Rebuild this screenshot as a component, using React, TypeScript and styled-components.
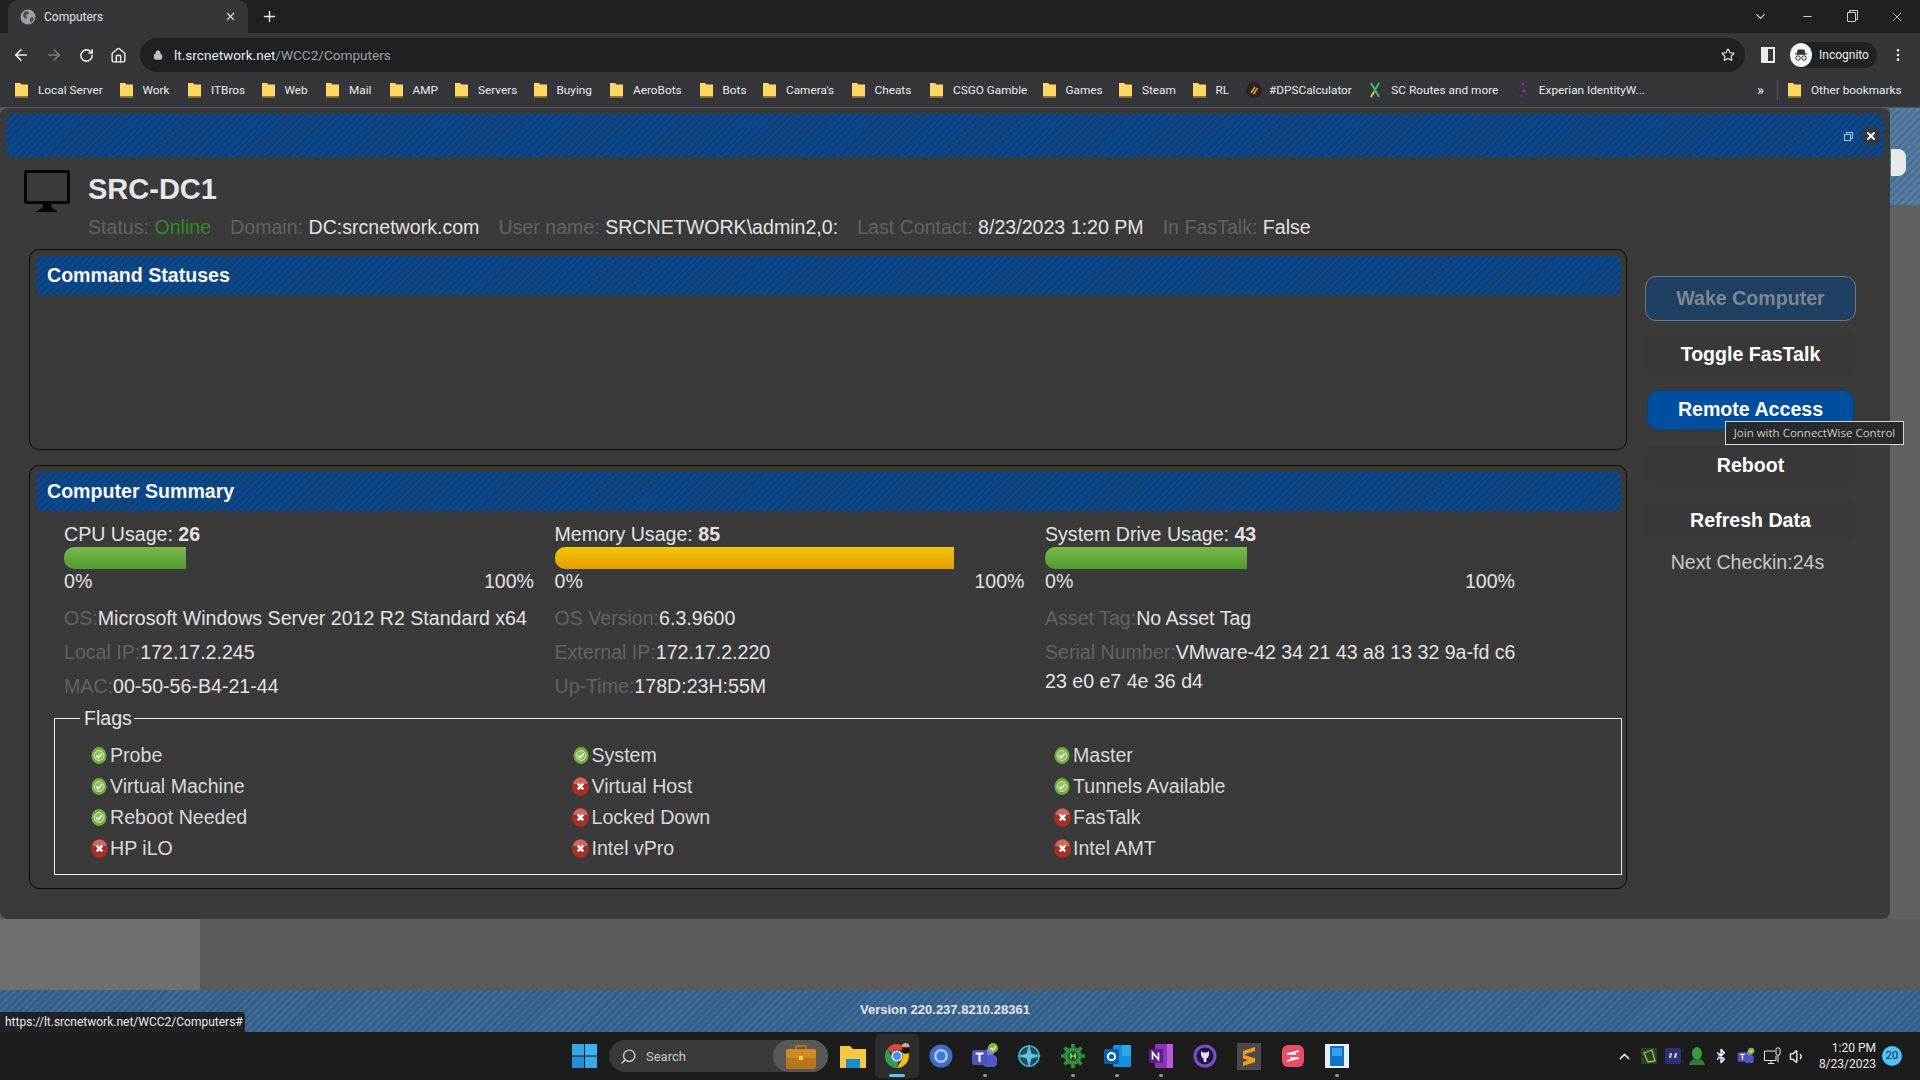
import React from "react";
import styled, { createGlobalStyle, css } from "styled-components";
import {
  ArrowLeft,
  ArrowRight,
  Bluetooth,
  ChevronDown,
  ChevronUp,
  Home,
  Lock,
  Minus,
  MoreVertical,
  Plus,
  RotateCw,
  Search,
  Star,
  Volume1,
  X,
} from "lucide-react";

const GlobalStyle = createGlobalStyle`
  html, body {
    margin: 0;
    padding: 0;
    width: 1920px;
    height: 1080px;
    overflow: hidden;
    background: #5b5b5b;
    font-family: "Liberation Sans", Arial, sans-serif;
  }
  * { box-sizing: border-box; }
`;

const CHROME_FONT = `Roboto, "Open Sans", sans-serif`;
const BODY_SIZE = "19.6px";

const stripes = (a: string, b: string) => css`
  background: repeating-linear-gradient(-45deg, ${a} 0 2.5px, ${b} 2.5px 5px);
`;

const bookmarks = [
  { label: "Local Server", w: 64 },
  { label: "Work", w: 28 },
  { label: "ITBros", w: 33 },
  { label: "Web", w: 24 },
  { label: "Mail", w: 23 },
  { label: "AMP", w: 25 },
  { label: "Servers", w: 38 },
  { label: "Buying", w: 36 },
  { label: "AeroBots", w: 49 },
  { label: "Bots", w: 23 },
  { label: "Camera's", w: 48 },
  { label: "Cheats", w: 38 },
  { label: "CSGO Gamble", w: 72 },
  { label: "Games", w: 36 },
  { label: "Steam", w: 33 },
  { label: "RL", w: 13 },
];

const flags = [
  { label: "Probe", ok: true },
  { label: "System", ok: true },
  { label: "Master", ok: true },
  { label: "Virtual Machine", ok: true },
  { label: "Virtual Host", ok: false },
  { label: "Tunnels Available", ok: true },
  { label: "Reboot Needed", ok: true },
  { label: "Locked Down", ok: false },
  { label: "FasTalk", ok: false },
  { label: "HP iLO", ok: false },
  { label: "Intel vPro", ok: false },
  { label: "Intel AMT", ok: false },
];

const FolderIcon = () => (
  <svg width="13" height="16" viewBox="0 0 13 16">
    <path d="M0 1h5l1.500 1.500H13V14.500H0z" fill="#fdd663" />
    <rect x="0" y="14.500" width="13" height="1.500" fill="#7a6a35" />
  </svg>
);

const FaviconGlobe = () => (
  <svg width="16" height="16" viewBox="0 0 16 16">
    <circle cx="8" cy="8" r="7.500" fill="#9aa0a6" />
    <path d="M4 3l4-1 1 3-3 1 1 3-2 1-2-3zM10 9l3-1 1 2-3 4-1-2z" fill="#4a4c50" />
  </svg>
);

const MonitorIcon = () => (
  <svg width="46" height="44" viewBox="0 0 46 44">
    <rect x="1.500" y="1.500" width="43" height="31" rx="1" fill="none" stroke="#050505" stroke-width="3" />
    <path d="M19 34h8l1 4 6 4H12l6-4z" fill="#050505" />
  </svg>
);

const FlagIcon = ({ ok }: { ok: boolean }) =>
  ok ? (
    <svg width="16" height="17" viewBox="0 0 16 17">
      <ellipse cx="8" cy="8.500" rx="7.500" ry="8.500" fill="#6fae3c" />
      <circle cx="8" cy="8.500" r="5" fill="#8cc063" stroke="#d5e8c0" stroke-width="1" />
      <path d="M5.300 8.600l2 2 3.400-4" fill="none" stroke="#fff" stroke-width="1.500" />
    </svg>
  ) : (
    <svg width="17" height="19" viewBox="0 0 17 19">
      <ellipse cx="8.500" cy="9.500" rx="8.500" ry="9.500" fill="#a92e23" />
      <path d="M1.500 7a7 6.500 0 0 1 14 0z" fill="#cf6a5e" />
      <path d="M5.700 6.700l5.600 5.600M11.300 6.700l-5.600 5.600" stroke="#fff" stroke-width="2.400" />
    </svg>
  );

const WindowsLogo = () => (
  <svg width="25" height="24" viewBox="0 0 25 24">
    <rect width="12" height="11.500" fill="#2fa8e6" />
    <rect x="13" width="12" height="11.500" fill="#3ab4ee" />
    <rect y="12.500" width="12" height="11.500" fill="#1f90d8" />
    <rect x="13" y="12.500" width="12" height="11.500" fill="#3aa8e6" />
  </svg>
);

const Briefcase = () => (
  <svg width="30" height="26" viewBox="0 0 30 26">
    <path d="M10 6V3h10v3" fill="none" stroke="#b5741a" stroke-width="2" />
    <rect y="6" width="30" height="20" rx="2" fill="#b8761c" />
    <rect y="6" width="30" height="9" rx="2" fill="#d08a24" />
    <rect x="13" y="13" width="4" height="4" fill="#f5d442" />
  </svg>
);

const ExplorerIcon = () => (
  <svg width="26" height="24" viewBox="0 0 26 24">
    <path d="M0 2h10l3 3h13v19H0z" fill="#f6c945" />
    <rect x="6" y="15" width="14" height="9" fill="#1f8ac8" />
  </svg>
);

const ChromeIcon = () => (
  <svg width="26" height="26" viewBox="0 0 24 24">
    <path d="M12 1a11 11 0 0 1 9.500 5.500H12a5.500 5.500 0 0 0-5 3L3.200 5.200A11 11 0 0 1 12 1z" fill="#e0463a" />
    <path d="M21.500 6.500A11 11 0 0 1 12 23l4.600-8a5.500 5.500 0 0 0 .2-6z" fill="#f4c20d" />
    <path d="M3.200 5.200L7.800 14a5.500 5.500 0 0 0 5.200 3.500L12 23A11 11 0 0 1 3.200 5.200z" fill="#2f9e4f" />
    <circle cx="12" cy="12" r="4.500" fill="#4a8df0" stroke="#fff" stroke-width="1.200" />
    <circle cx="20" cy="3.500" r="3.500" fill="#d8a890" />
    <path d="M16.500 4h7v2.500a3.500 3.500 0 0 1-7 0z" fill="#111" />
  </svg>
);

const ChromiumIcon = () => (
  <svg width="24" height="26" viewBox="0 0 24 24">
    <circle cx="12" cy="12" r="11.500" fill="#3f6fc4" />
    <circle cx="12" cy="12" r="7" fill="#a9c6f4" />
    <circle cx="12" cy="12" r="4.500" fill="#3f78d8" />
  </svg>
);

const TeamsIcon = ({ size = 28 }: { size?: number }) => (
  <svg width={size} height={size} viewBox="0 0 28 28">
    <circle cx="19" cy="10" r="4" fill="#7b83eb" />
    <rect x="12" y="13" width="14" height="12" rx="4" fill="#5059c9" />
    <rect x="1" y="8" width="15" height="15" rx="2" fill="#4b53bc" />
    <path d="M4.500 11.500h8M8.500 11.500V20" stroke="#fff" stroke-width="2" />
    <circle cx="22" cy="6" r="5" fill="#7fba3c" />
    <path d="M19.500 6l2 2 3-3.500" fill="none" stroke="#fff" stroke-width="1.300" />
  </svg>
);

const CompassIcon = () => (
  <svg width="24" height="26" viewBox="0 0 24 24">
    <circle cx="12" cy="12" r="10" fill="#1e4a5a" stroke="#45b0c8" stroke-width="1.600" />
    <path d="M12 0l2.400 9.600L24 12l-9.600 2.400L12 24l-2.400-9.600L0 12l9.600-2.400z" fill="#5cc2dc" />
  </svg>
);

const GearIcon = () => (
  <svg width="26" height="26" viewBox="0 0 24 24">
    <circle cx="12" cy="12" r="8" fill="#2f8f3a" />
    <path
      d="M12 1v4M12 19v4M1 12h4M19 12h4M4.200 4.200l3 3M16.800 16.800l3 3M4.200 19.800l3-3M16.800 7.200l3-3"
      stroke="#2f8f3a"
      stroke-width="3.400"
    />
    <circle cx="12" cy="12" r="4.500" fill="#1d4f26" />
    <path d="M10 9.500v5M14 9.500v5M10 12h4" stroke="#b8e0b0" stroke-width="1.100" />
  </svg>
);

const OutlookIcon = () => (
  <svg width="27" height="26" viewBox="0 0 27 26">
    <rect x="9" y="2" width="18" height="22" rx="1.500" fill="#1490df" />
    <rect x="18" y="2" width="9" height="11" fill="#28a8ea" />
    <rect y="6" width="15" height="15" rx="1.500" fill="#0a5fa8" />
    <circle cx="7.500" cy="13.500" r="3.600" fill="none" stroke="#fff" stroke-width="2" />
  </svg>
);

const OneNoteIcon = () => (
  <svg width="24" height="26" viewBox="0 0 24 26">
    <rect x="6" y="1" width="18" height="24" rx="1.500" fill="#9332bf" />
    <rect x="18" y="1" width="6" height="24" fill="#ba5ad8" />
    <rect y="6" width="14" height="14" rx="1.500" fill="#5d1d8c" />
    <path d="M3.500 16.500v-7l6 7v-7" fill="none" stroke="#fff" stroke-width="1.600" />
  </svg>
);

const GithubIcon = () => (
  <svg width="24" height="26" viewBox="0 0 24 24">
    <circle cx="12" cy="12" r="11.500" fill="#7c4fc4" />
    <circle cx="12" cy="12" r="8.500" fill="#24123f" />
    <path d="M8 7l2 1.400h4L16 7v4l-1 2.400-1.600 1V18h-2.800v-3.600L9 13.400 8 11z" fill="#e6dcf5" />
  </svg>
);

const SublimeIcon = () => (
  <svg width="24" height="27" viewBox="0 0 24 27">
    <rect width="24" height="27" fill="#4a4a4a" />
    <path d="M6 8l12-4v4L6 12zM6 11.500l12 4v4l-12-4zM6 19l12-4v4L6 23z" fill="#f59a1e" />
  </svg>
);

const PinkIcon = () => (
  <svg width="24" height="26" viewBox="0 0 24 24">
    <rect x="1" y="1" width="22" height="22" rx="6" fill="#ec4b66" />
    <path d="M6 10l12-3M6 17l12-3M6 10h9M9 14h9" stroke="#fff" stroke-width="1.600" />
  </svg>
);

const FilmIcon = () => (
  <svg width="24" height="24" viewBox="0 0 24 24">
    <rect width="24" height="24" fill="#e6eef6" />
    <rect x="5" y="2" width="14" height="20" fill="#1273c4" />
    <rect x="7" y="4" width="10" height="8" fill="#3aa0e8" />
  </svg>
);

const TrayMonitor = () => (
  <svg width="18" height="18" viewBox="0 0 18 18" fill="none" stroke="#e6e6e6" stroke-width="1">
    <path d="M12 4H1.500v9.500H13V9" />
    <path d="M5 16.500h6M8 13.500v3" />
    <rect x="13" y="1" width="4" height="7" rx="1" />
    <path d="M15 8v7" />
  </svg>
);

const TrayGreen = () => (
  <svg width="16" height="16" viewBox="0 0 16 16">
    <rect width="16" height="16" fill="#2c3f2b" />
    <path d="M3 5l8-3 3 11-7 1z" fill="none" stroke="#8ccf3f" stroke-width="1.300" />
  </svg>
);

const TrayQuote = () => (
  <svg width="16" height="16" viewBox="0 0 16 16">
    <rect width="16" height="16" rx="2" fill="#2f2f73" />
    <path d="M5 5h2L6 10H4zM10 5h2l-1 5H9z" fill="#d8d8f4" />
  </svg>
);

const TrayPerson = () => (
  <svg width="16" height="18" viewBox="0 0 16 18">
    <ellipse cx="8" cy="6.500" rx="5" ry="6.500" fill="#3c9a3c" />
    <path d="M0 18c1-5 4-6 8-6s7 1 8 6z" fill="#2f7d2f" />
  </svg>
);

const BLUE_BAR = stripes("#034b96", "#163f70");

const Screen = styled.div`
  width: 1920px;
  height: 1080px;
  display: flex;
  flex-direction: column;
  position: relative;
  overflow: hidden;
`;

const TabStrip = styled.div`
  height: 33px;
  background: #1f2023;
  display: flex;
  align-items: stretch;
  padding-left: 8px;
  color: #e8eaed;
  font-family: ${CHROME_FONT};
`;

const Tab = styled.div`
  width: 240px;
  background: #35363a;
  border-radius: 10px 10px 0 0;
  display: flex;
  align-items: center;
  padding: 0 11px 0 12px;
  font-size: 12px;
  gap: 8px;
  color: #dfe1e5;
`;

const TabTitle = styled.span`
  flex: 1;
`;

const NewTab = styled.div`
  width: 42px;
  display: flex;
  align-items: center;
  justify-content: center;
`;

const WindowButtons = styled.div`
  margin-left: auto;
  display: flex;
  align-items: center;
  gap: 33px;
  padding-right: 15px;
  color: #d0d0d0;
`;

const RestoreGlyph = styled.span`
  width: 9px;
  height: 10px;
  border: 1px solid #d0d0d0;
  border-radius: 1px;
  box-shadow: 2px -2px 0 -1px #1f2023, 2px -2px 0 0 #d0d0d0;
`;

const Toolbar = styled.div`
  height: 41px;
  background: #35363a;
  display: flex;
  align-items: center;
  padding: 3px 0 0 5px;
  color: #e8eaed;
  font-family: ${CHROME_FONT};
`;

const NavButton = styled.span<{ $dim?: boolean }>`
  width: 32.5px;
  flex-shrink: 0;
  display: flex;
  justify-content: center;
  color: ${(p) => (p.$dim ? "#7a7c80" : "#eceef1")};
`;

const AddressBar = styled.div`
  width: 1605px;
  flex-shrink: 0;
  height: 34px;
  margin-left: 5px;
  background: #1f2023;
  border-radius: 17px;
  display: flex;
  align-items: center;
  padding: 0 10px 0 13px;
  font-size: 13.6px;
`;

const Host = styled.span`
  margin-left: 11px;
  color: #e8eaed;
`;

const Path = styled.span`
  color: #9aa0a6;
`;

const SideToggle = styled.span`
  width: 14px;
  height: 16px;
  flex-shrink: 0;
  margin-left: 16px;
  border: 2px solid #e8eaed;
  border-left-width: 7px;
`;

const ProfilePill = styled.div`
  width: 87px;
  height: 26px;
  flex-shrink: 0;
  margin-left: 15px;
  background: #202124;
  border-radius: 13px;
  display: flex;
  align-items: center;
  gap: 7px;
  font-size: 12px;
  color: #e8eaed;
`;

const ProfileAvatar = styled.span`
  width: 22px;
  height: 24px;
  border-radius: 50%;
  background: #f4f4f4;
  display: flex;
  align-items: center;
  justify-content: center;
`;

const MenuDots = styled.span`
  margin-left: 13px;
  display: flex;
`;

const BookmarksBar = styled.div`
  height: 34px;
  background: #35363a;
  border-bottom: 1px solid #55575b;
  display: flex;
  align-items: center;
  padding: 0 0 2px 15px;
  gap: 17.5px;
  font-family: ${CHROME_FONT};
  font-size: 11.8px;
  color: #e8eaed;
`;

const Bookmark = styled.div<{ $gap?: number }>`
  display: flex;
  align-items: center;
  gap: ${(p) => p.$gap ?? 10}px;
  white-space: nowrap;
`;

const BookmarkLabel = styled.span<{ $w: number }>`
  width: ${(p) => p.$w}px;
`;

const BookmarkTail = styled.div`
  margin-left: auto;
  display: flex;
  align-items: center;
  gap: 10px;
  padding-right: 14px;
`;

const Chevrons = styled.span`
  margin-right: 3px;
  font-size: 15px;
`;

const TailLabel = styled.span`
  width: 95px;
`;

const Divider = styled.span`
  width: 1px;
  height: 20px;
  background: #55575b;
`;

const PageArea = styled.div`
  flex: 1;
  display: grid;
  grid-template-columns: 1890px 30px;
  grid-template-rows: 811px 71px;
  background: #5b5b5b;
  position: relative;
`;

const SideStrip = styled.div`
  position: relative;
  background: linear-gradient(to bottom, transparent 97px, #606060 97px),
    repeating-linear-gradient(-45deg, #47709a 0 2.5px, #5a7c9f 2.5px 5px);
`;

const ChatBubble = styled.span`
  position: absolute;
  left: 1px;
  top: 41px;
  width: 15px;
  height: 27px;
  border-radius: 0 8px 8px 0;
  background: #e9e9e9;
`;

const LowerBand = styled.div`
  grid-column: 1 / span 2;
  display: flex;
  background: #5b5b5b;
`;

const LowerLeft = styled.div`
  width: 200px;
  background: #6f6f6f;
`;

const Modal = styled.div`
  background: #3a3a3a;
  border-radius: 8px;
  padding: 6px;
  color: #e2e2e2;
`;

const ModalBar = styled.div`
  ${BLUE_BAR}
  height: 43px;
  border-radius: 6px;
  display: flex;
  align-items: center;
  justify-content: flex-end;
  padding-right: 3px;
  gap: 10px;
`;

const RestoreIcon = styled.span`
  width: 7px;
  height: 7px;
  margin-top: 3px;
  border: 1px solid #9ec4ea;
  box-shadow: 2px -2px 0 -1px #0b4c90, 2px -2px 0 0 #9ec4ea;
`;

const CloseCircle = styled.span`
  width: 20px;
  height: 20px;
  border-radius: 50%;
  background: #2f3a48;
  color: #f2f2f2;
  display: flex;
  align-items: center;
  justify-content: center;
`;

const Hero = styled.div`
  height: 92px;
  display: grid;
  grid-template-columns: 64px 1fr;
  padding: 13px 0 0 18px;
`;

const HostName = styled.h1`
  margin: 2px 0 9px;
  font-size: 29px;
  line-height: 34px;
  font-weight: 700;
  color: #e6e6e6;
`;

const StatusRow = styled.div`
  display: flex;
  gap: 19px;
  font-size: ${BODY_SIZE};
  line-height: 24px;
`;

const Muted = styled.span`
  color: #636363;
`;

const Online = styled.span`
  color: #2f8a24;
`;

const Columns = styled.div`
  display: flex;
  padding-left: 23px;
`;

const Panels = styled.div`
  width: 1598px;
  flex-shrink: 0;
  display: flex;
  flex-direction: column;
  gap: 15px;
`;

const Panel = styled.section<{ $h: number }>`
  height: ${(p) => p.$h}px;
  border: 1px solid #0a0a0a;
  border-radius: 10px;
  padding: 6px 5px 5px 6px;
`;

const PanelBar = styled.div`
  ${BLUE_BAR}
  height: 39px;
  border-radius: 6px;
  padding-left: 11px;
  font-size: ${BODY_SIZE};
  line-height: 39px;
  font-weight: 700;
  color: #f6f6f6;
`;

const SummaryGrid = styled.div`
  display: grid;
  grid-template-columns: 470px 470px 480px;
  column-gap: 20.5px;
  padding: 11px 0 0 28px;
  height: 195px;
`;

const SummaryColumn = styled.div`
  display: flex;
  flex-direction: column;
`;

const UsageLabel = styled.div`
  font-size: ${BODY_SIZE};
  line-height: 24px;
`;

const Track = styled.div`
  width: 470px;
  height: 22px;
  margin-top: 1px;
  border-radius: 10px 0 0 10px;
  overflow: hidden;
`;

const Fill = styled.div<{ $value: number; $warn?: boolean }>`
  height: 100%;
  width: ${(p) => p.$value}%;
  background: ${(p) =>
    p.$warn
      ? "linear-gradient(#f0c808, #e99c02)"
      : "linear-gradient(#7cb84c, #4f9a30)"};
`;

const Scale = styled.div`
  width: 470px;
  display: flex;
  justify-content: space-between;
  font-size: ${BODY_SIZE};
  line-height: 22px;
  margin: 1px 0 12px;
`;

const Field = styled.div`
  font-size: ${BODY_SIZE};
  line-height: 29px;
  margin-bottom: 5px;
`;

const Flags = styled.fieldset`
  margin: 0 0 0 18px;
  width: 1568px;
  height: 169px;
  border: 1px solid #e8e8e8;
  padding: 10px 0 0 0;
`;

const FlagsLegend = styled.legend`
  margin-left: 25px;
  padding: 0 2px 0 4px;
  font-size: ${BODY_SIZE};
  line-height: 24px;
`;

const FlagGrid = styled.div`
  display: grid;
  grid-template-columns: repeat(3, 481.5px);
  padding-left: 35px;
`;

const FlagRow = styled.div`
  display: flex;
  align-items: center;
  gap: 2px;
  height: 31px;
  font-size: ${BODY_SIZE};
  color: #d8d8d8;
`;

const FlagMark = styled.span`
  width: 18px;
  flex-shrink: 0;
  display: flex;
  justify-content: center;
`;

const Actions = styled.aside`
  width: 211px;
  flex-shrink: 0;
  margin-left: 18px;
  padding-top: 27px;
  display: flex;
  flex-direction: column;
  font-size: ${BODY_SIZE};
  font-weight: 700;
`;

const ActionButton = styled.button<{ $kind?: "wake" | "active"; $h: number }>`
  position: relative;
  height: ${(p) => p.$h}px;
  margin-bottom: ${(p) => (p.$kind === "wake" ? 11 : 15)}px;
  padding: 1px 0 0;
  font: inherit;
  border-radius: 11px;
  border: none;
  color: #fff;
  background: #383838;
  ${(p) =>
    p.$kind === "wake" &&
    css`
      padding: 0;
      background: #1f3f63;
      border: 1px solid #6d7883;
      color: #7c8794;
    `}
  ${(p) =>
    p.$kind === "active" &&
    css`
      margin-left: 2px;
      margin-right: 2px;
      padding: 0 0 2px;
      background: #024e9e;
      border: 1px solid #0f3f73;
    `}
`;

const Tooltip = styled.div`
  position: absolute;
  left: 77px;
  top: 30px;
  width: 179px;
  height: 24px;
  z-index: 2;
  background: #2b2b2b;
  border: 1px solid #d4d4d4;
  font-family: "Open Sans", sans-serif;
  font-size: 11.5px;
  font-weight: 400;
  line-height: 22px;
  text-align: center;
  color: #c9c9c9;
  white-space: nowrap;
`;

const NextCheckin = styled.div`
  margin-top: -5px;
  font-weight: 400;
  line-height: 24px;
  text-align: center;
  padding-right: 6px;
  color: #c8c8c8;
`;

const Footer = styled.footer`
  ${stripes("#3f6c96", "#335d88")}
  height: 42px;
  position: relative;
  padding: 12px 0 0 860px;
  font-size: 13px;
  font-weight: 700;
  line-height: 16px;
  color: #e6e6e6;
`;

const StatusBubble = styled.div`
  position: absolute;
  left: 0;
  bottom: 0;
  width: 245px;
  height: 20px;
  background: #202124;
  border-radius: 0 4px 0 0;
  padding-left: 5px;
  font-family: ${CHROME_FONT};
  font-size: 12px;
  font-weight: 400;
  line-height: 20px;
  color: #e8eaed;
`;

const Taskbar = styled.div`
  height: 48px;
  background: #1c1c1c;
  display: flex;
  align-items: center;
  padding-left: 572px;
  font-family: ${CHROME_FONT};
  color: #e6e6e6;
`;

const SearchPill = styled.div`
  width: 219px;
  height: 32px;
  margin: 0 3px 0 12px;
  border-radius: 16px;
  background: #3a3a3a;
  display: flex;
  align-items: center;
  padding-left: 11px;
  gap: 9px;
  font-size: 13px;
  color: #c8c8c8;
`;

const SearchBadge = styled.span`
  margin-left: auto;
  width: 55px;
  height: 32px;
  border-radius: 16px;
  background: #585858;
  display: flex;
  align-items: center;
  justify-content: center;
`;

const TaskSlot = styled.div<{ $open?: boolean; $active?: boolean }>`
  position: relative;
  width: 44px;
  height: 44px;
  border-radius: 5px;
  display: flex;
  align-items: center;
  justify-content: center;
  background: ${(p) => (p.$active ? "#2d2d2d" : "transparent")};
  &::after {
    content: "";
    display: ${(p) => (p.$open || p.$active ? "block" : "none")};
    position: absolute;
    bottom: 1px;
    left: 50%;
    transform: translateX(-50%);
    width: ${(p) => (p.$active ? 16 : 4)}px;
    height: 3px;
    border-radius: 2px;
    background: ${(p) => (p.$active ? "#5cc3f2" : "#9a9a9a")};
  }
`;

const Tray = styled.div`
  margin-left: auto;
  display: flex;
  align-items: center;
  gap: 8px;
  padding-right: 18px;
`;

const Clock = styled.div`
  width: 62px;
  text-align: right;
  font-size: 12px;
  line-height: 16px;
`;

const CountBadge = styled.span`
  width: 20px;
  height: 20px;
  margin-left: -2px;
  border-radius: 50%;
  background: #4cc2ff;
  color: #1c1c1c;
  font-size: 11px;
  line-height: 20px;
  text-align: center;
`;

const App = () => {
  return (
    <Screen>
      <GlobalStyle />
      <TabStrip>
        <Tab>
          <FaviconGlobe />
          <TabTitle>Computers</TabTitle>
          <X size={13} />
        </Tab>
        <NewTab>
          <Plus size={17} />
        </NewTab>
        <WindowButtons>
          <ChevronDown size={15} />
          <Minus size={13} />
          <RestoreGlyph />
          <X size={16} strokeWidth={1.2} />
        </WindowButtons>
      </TabStrip>

      <Toolbar>
        <NavButton><ArrowLeft size={18} /></NavButton>
        <NavButton $dim><ArrowRight size={18} /></NavButton>
        <NavButton><RotateCw size={15} strokeWidth={2.5} /></NavButton>
        <NavButton><Home size={17} /></NavButton>
        <AddressBar>
          <Lock size={10} color="#c0c2c6" fill="#c0c2c6" />
          <Host>lt.srcnetwork.net</Host>
          <Path>/WCC2/Computers</Path>
          <Star size={14} style={{ marginLeft: "auto" }} />
        </AddressBar>
        <SideToggle />
        <ProfilePill>
          <ProfileAvatar>
            <svg width="16" height="16" viewBox="0 0 16 16">
              <path d="M2 7h12M4 7l1-4h6l1 4z" fill="#333" stroke="#333" />
              <circle cx="5" cy="11" r="2.200" fill="none" stroke="#333" />
              <circle cx="11" cy="11" r="2.200" fill="none" stroke="#333" />
            </svg>
          </ProfileAvatar>
          Incognito
        </ProfilePill>
        <MenuDots><MoreVertical size={16} /></MenuDots>
      </Toolbar>

      <BookmarksBar>
        {bookmarks.map((b) => (
          <Bookmark key={b.label}>
            <FolderIcon />
            <BookmarkLabel $w={b.w}>{b.label}</BookmarkLabel>
          </Bookmark>
        ))}
        <Bookmark $gap={7}>
          <svg width="16" height="16" viewBox="0 0 16 16">
            <circle cx="8" cy="8" r="8" fill="#2c2320" />
            <path d="M5 11l4-6M7.500 12l4-6" stroke="#e8973a" stroke-width="1.600" />
          </svg>
          #DPSCalculator
        </Bookmark>
        <Bookmark>
          <svg width="12" height="16" viewBox="0 0 12 16">
            <path d="M2 1l8 14M10 1L2 15" stroke="#3fb86a" stroke-width="2" />
            <path d="M2 15l3-5" stroke="#e8b23a" stroke-width="2" />
          </svg>
          SC Routes and more
        </Bookmark>
        <Bookmark>
          <svg width="13" height="18" viewBox="0 0 13 18">
            <circle cx="7" cy="3" r="1.500" fill="#6a3fa0" />
            <circle cx="3" cy="8" r="1.500" fill="#4a2f80" />
            <circle cx="8" cy="10" r="1.500" fill="#a03f70" />
            <circle cx="5" cy="15" r="1.500" fill="#3f3fa0" />
          </svg>
          Experian IdentityW...
        </Bookmark>
        <BookmarkTail>
          <Chevrons>»</Chevrons>
          <Divider />
          <FolderIcon />
          <TailLabel>Other bookmarks</TailLabel>
        </BookmarkTail>
      </BookmarksBar>

      <PageArea>
        <Modal>
          <ModalBar>
            <RestoreIcon />
            <CloseCircle><X size={12} strokeWidth={4} /></CloseCircle>
          </ModalBar>
          <Hero>
            <MonitorIcon />
            <div>
              <HostName>SRC-DC1</HostName>
              <StatusRow>
                <span><Muted>Status: </Muted><Online>Online</Online></span>
                <span><Muted>Domain: </Muted>DC:srcnetwork.com</span>
                <span><Muted>User name: </Muted>SRCNETWORK\admin2,0:</span>
                <span><Muted>Last Contact: </Muted>8/23/2023 1:20 PM</span>
                <span><Muted>In FasTalk: </Muted>False</span>
              </StatusRow>
            </div>
          </Hero>
          <Columns>
            <Panels>
              <Panel $h={201}>
                <PanelBar>Command Statuses</PanelBar>
              </Panel>
              <Panel $h={424}>
                <PanelBar>Computer Summary</PanelBar>
                <SummaryGrid>
                  <SummaryColumn>
                    <UsageLabel>CPU Usage: <b>26</b></UsageLabel>
                    <Track><Fill $value={26} /></Track>
                    <Scale><span>0%</span><span>100%</span></Scale>
                    <Field><Muted>OS:</Muted>Microsoft Windows Server 2012 R2 Standard x64</Field>
                    <Field><Muted>Local IP:</Muted>172.17.2.245</Field>
                    <Field><Muted>MAC:</Muted>00-50-56-B4-21-44</Field>
                  </SummaryColumn>
                  <SummaryColumn>
                    <UsageLabel>Memory Usage: <b>85</b></UsageLabel>
                    <Track><Fill $value={85} $warn /></Track>
                    <Scale><span>0%</span><span>100%</span></Scale>
                    <Field><Muted>OS Version:</Muted>6.3.9600</Field>
                    <Field><Muted>External IP:</Muted>172.17.2.220</Field>
                    <Field><Muted>Up-Time:</Muted>178D:23H:55M</Field>
                  </SummaryColumn>
                  <SummaryColumn>
                    <UsageLabel>System Drive Usage: <b>43</b></UsageLabel>
                    <Track><Fill $value={43} /></Track>
                    <Scale><span>0%</span><span>100%</span></Scale>
                    <Field><Muted>Asset Tag:</Muted>No Asset Tag</Field>
                    <Field><Muted>Serial Number:</Muted>VMware-42 34 21 43 a8 13 32 9a-fd c6 23 e0 e7 4e 36 d4</Field>
                  </SummaryColumn>
                </SummaryGrid>
                <Flags>
                  <FlagsLegend>Flags</FlagsLegend>
                  <FlagGrid>
                    {flags.map((f) => (
                      <FlagRow key={f.label}>
                        <FlagMark><FlagIcon ok={f.ok} /></FlagMark>
                        {f.label}
                      </FlagRow>
                    ))}
                  </FlagGrid>
                </Flags>
              </Panel>
            </Panels>
            <Actions>
              <ActionButton $kind="wake" $h={45}>Wake Computer</ActionButton>
              <ActionButton $h={43}>Toggle FasTalk</ActionButton>
              <ActionButton $kind="active" $h={40}>
                Remote Access
                <Tooltip>Join with ConnectWise Control</Tooltip>
              </ActionButton>
              <ActionButton $h={40}>Reboot</ActionButton>
              <ActionButton $h={40}>Refresh Data</ActionButton>
              <NextCheckin>Next Checkin:24s</NextCheckin>
            </Actions>
          </Columns>
        </Modal>
        <SideStrip>
          <ChatBubble />
        </SideStrip>
        <LowerBand>
          <LowerLeft />
        </LowerBand>
      </PageArea>

      <Footer>
        Version 220.237.8210.28361
        <StatusBubble>https://lt.srcnetwork.net/WCC2/Computers#</StatusBubble>
      </Footer>

      <Taskbar>
        <WindowsLogo />
        <SearchPill>
          <Search size={17} style={{ transform: "scaleX(-1)" }} />
          Search
          <SearchBadge><Briefcase /></SearchBadge>
        </SearchPill>
        <TaskSlot><ExplorerIcon /></TaskSlot>
        <TaskSlot $active><ChromeIcon /></TaskSlot>
        <TaskSlot><ChromiumIcon /></TaskSlot>
        <TaskSlot $open><TeamsIcon /></TaskSlot>
        <TaskSlot><CompassIcon /></TaskSlot>
        <TaskSlot $open><GearIcon /></TaskSlot>
        <TaskSlot $open><OutlookIcon /></TaskSlot>
        <TaskSlot $open><OneNoteIcon /></TaskSlot>
        <TaskSlot><GithubIcon /></TaskSlot>
        <TaskSlot><SublimeIcon /></TaskSlot>
        <TaskSlot><PinkIcon /></TaskSlot>
        <TaskSlot $open><FilmIcon /></TaskSlot>
        <Tray>
          <ChevronUp size={17} />
          <TrayGreen />
          <TrayQuote />
          <TrayPerson />
          <Bluetooth size={16} color="#fff" fill="#1677e6" />
          <TeamsIcon size={18} />
          <TrayMonitor />
          <Volume1 size={17} />
          <Clock>
            1:20 PM
            <br />
            8/23/2023
          </Clock>
          <CountBadge>20</CountBadge>
        </Tray>
      </Taskbar>
    </Screen>
  );
};

export default App;
